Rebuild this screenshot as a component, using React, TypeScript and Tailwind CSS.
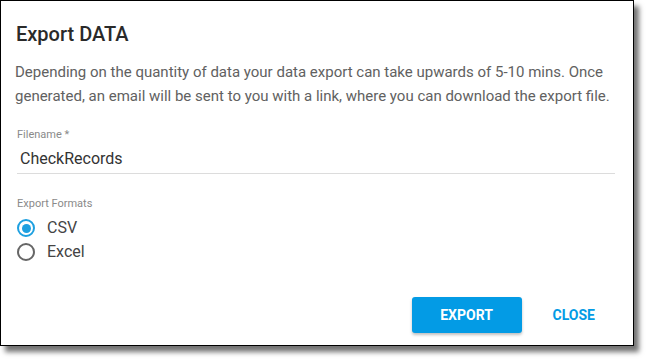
export default function App() {
  return (
    <div className="w-[649px] h-[361px] bg-white font-['Roboto',sans-serif]">
      <div className="w-[634px] h-[346px] border border-black bg-white shadow-[5px_6px_5px_rgba(0,0,0,0.55)] flex flex-col">
        <div className="pt-[19px] px-[14px]">
          <h1 className="text-[20px] leading-[28px] font-medium text-[#2a2a2a] pl-[1px]">Export DATA</h1>
          <p className="mt-[12px] text-[15px] leading-[24px] text-[#616161]">
            Depending on the quantity of data your data export can take upwards of 5-10 mins. Once generated, an email will be sent to you with a link, where you can download the export file.
          </p>

          <div className="mt-[19px] pl-[2px] pr-[4px]">
            <label className="block text-[11px] leading-[16px] text-[#8a8a8a]">Filename *</label>
            <div className="mt-[4px] border-b border-[#dcdcdc] pb-[2px]">
              <input
                defaultValue="CheckRecords"
                className="w-full text-[16px] leading-[24px] h-[24px] text-[#333] outline-none pl-[3px]"
              />
            </div>
          </div>

          <div className="mt-[22px] pl-[2px]">
            <div className="text-[11px] leading-[16px] text-[#8a8a8a]">Export Formats</div>
            <div className="flex flex-col mt-[4px]">
              <Radio label="CSV" checked />
              <Radio label="Excel" />
            </div>
          </div>
        </div>

        <div className="mt-auto flex items-center justify-end pb-[12px] pr-[28px] gap-[21px]">
          <button className="w-[110px] h-[36px] rounded-[3px] bg-[#039be5] text-white text-[14px] font-bold shadow-[0_2px_3px_rgba(0,0,0,0.25)]">
            EXPORT
          </button>
          <button className="h-[36px] px-[10px] text-[#039be5] text-[14px] font-bold">
            CLOSE
          </button>
        </div>
      </div>
    </div>
  );
}

function Radio({ label, checked }: { label: string; checked?: boolean }) {
  return (
    <label className="flex items-center h-[24px] gap-[12px]">
      <span
        className={
          checked
            ? "w-[18px] h-[18px] rounded-full border-2 border-[#1ea0e0] flex items-center justify-center"
            : "w-[18px] h-[18px] rounded-full border-2 border-[#666] flex items-center justify-center"
        }
      >
        {checked && <span className="w-[9px] h-[9px] rounded-full bg-[#1ea0e0]" />}
      </span>
      <span className="text-[16px] leading-[24px] text-[#444]">{label}</span>
    </label>
  );
}
